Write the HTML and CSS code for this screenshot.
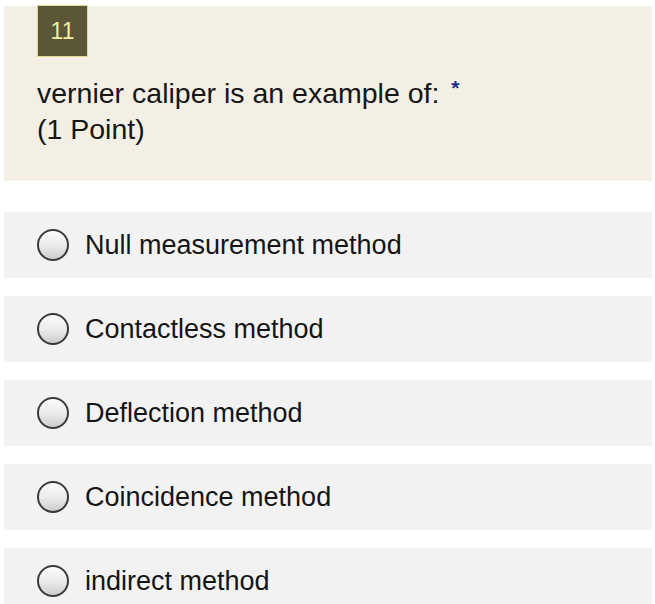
FILE: index.html
```html
<!DOCTYPE html>
<html>
<head>
<meta charset="utf-8">
<link rel="stylesheet" href="styles.css">
</head>
<body>
<div class="page">
  <div class="question">
    <div class="badge">11</div>
    <div class="qtext">vernier caliper is an example of: <span class="req">*</span><br>(1 Point)</div>
  </div>
  <div class="options">
    <div class="option"><span class="radio"></span><span class="label">Null measurement method</span></div>
    <div class="option"><span class="radio"></span><span class="label">Contactless method</span></div>
    <div class="option"><span class="radio"></span><span class="label">Deflection method</span></div>
    <div class="option"><span class="radio"></span><span class="label">Coincidence method</span></div>
    <div class="option"><span class="radio"></span><span class="label">indirect method</span></div>
  </div>
</div>
</body>
</html>
```
FILE: styles.css
```css
html, body {
  margin: 0;
  padding: 0;
  background: #ffffff;
}
body {
  font-family: "Liberation Sans", Arial, sans-serif;
  color: #111111;
}
.page {
  padding: 5px 3px 0 4px;
}
.question {
  background: #f3efe5;
  height: 176px;
  padding-left: 33px;
  box-sizing: border-box;
  border-top: 1px solid #ffffff;
}
.badge {
  width: 51px;
  height: 52px;
  margin-top: -1px;
  box-sizing: border-box;
  background: #5b5637;
  border: 1px solid #e2d88f;
  color: #f6eea6;
  font-size: 23px;
  display: flex;
  align-items: center;
  justify-content: center;
}
.qtext {
  margin-top: 18px;
  font-size: 28.5px;
  line-height: 36px;
  color: #161616;
}
.req {
  color: #1c2a8c;
  font-size: 21px;
  font-weight: bold;
  vertical-align: top;
  position: relative;
  top: -5px;
  margin-left: 4px;
}
.options {
  margin-top: 31px;
  display: flex;
  flex-direction: column;
  gap: 18px;
}
.option {
  background: #f2f2f2;
  height: 66px;
  display: flex;
  align-items: center;
  padding-left: 33px;
}
.radio {
  width: 32px;
  height: 32px;
  border-radius: 50%;
  border: 2px solid #3a3a3a;
  background: linear-gradient(#fbfbfb 0%, #ececec 50%, #cdcdcd 100%);
  box-sizing: border-box;
  flex: none;
}
.label {
  margin-left: 16px;
  font-size: 27px;
  color: #151515;
}
```
